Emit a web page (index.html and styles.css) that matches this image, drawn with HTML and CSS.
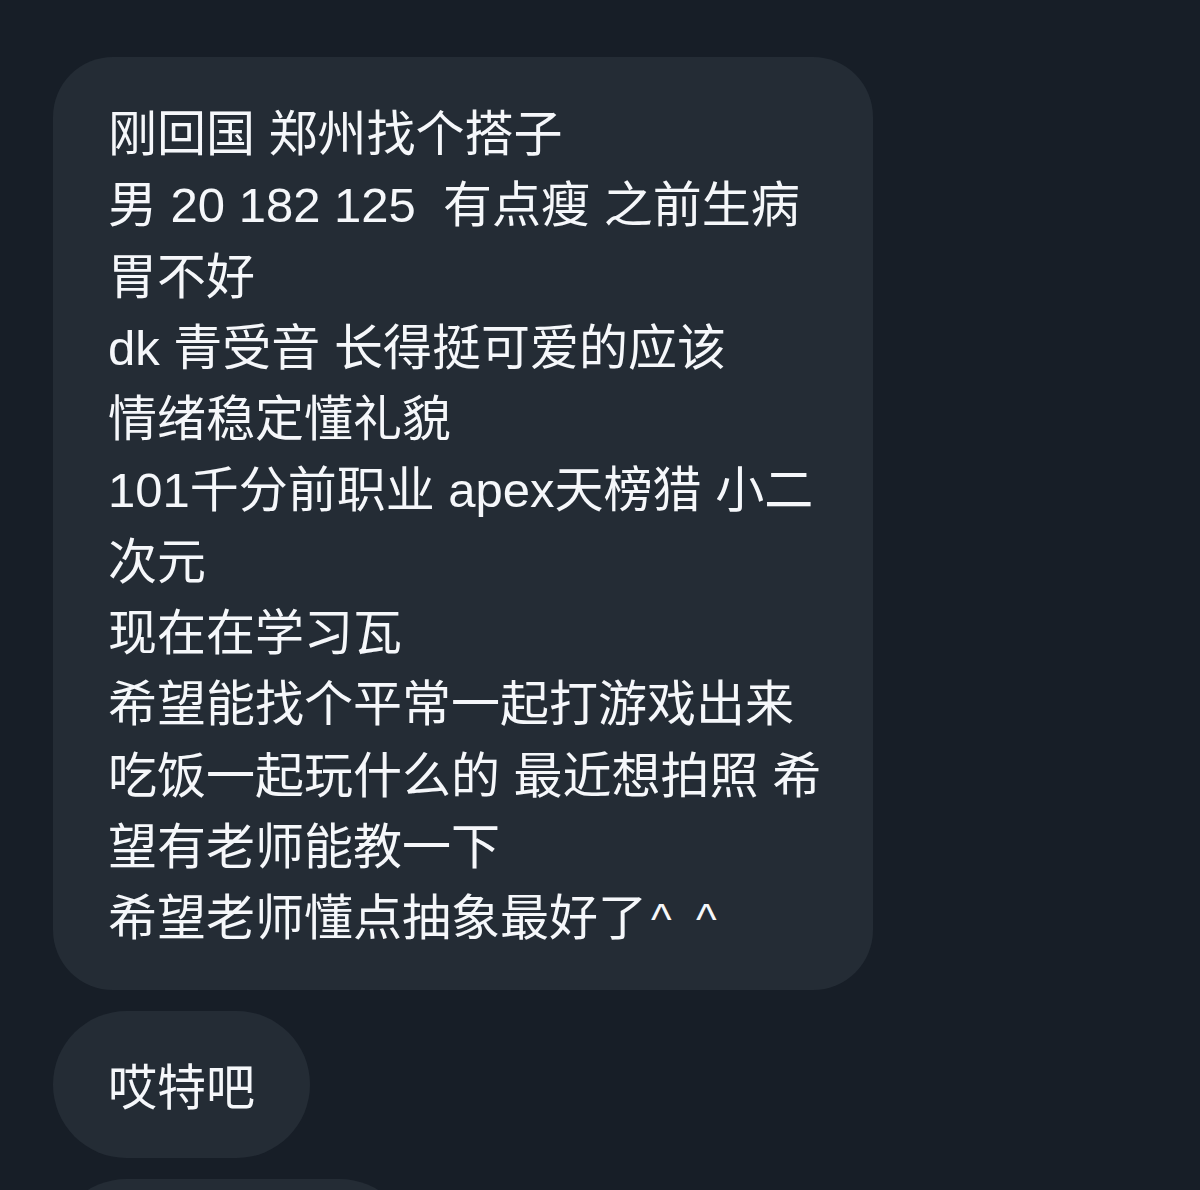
FILE: index.html
```html
<!DOCTYPE html>
<html lang="zh-CN">
<head>
    <meta charset="UTF-8">
    <meta name="viewport" content="width=device-width, initial-scale=1.0">
    <title>Messages</title>
    <link rel="stylesheet" href="styles.css">
</head>
<body>
    <div class="chat">
        <div class="bubble wide">
            刚回国 郑州找个搭子<br>
            男 20 182 125&nbsp; 有点瘦 之前生病<br>
            胃不好<br>
            dk 青受音 长得挺可爱的应该<br>
            情绪稳定懂礼貌<br>
            101千分前职业 apex天榜猎 小二<br>
            次元<br>
            现在在学习瓦<br>
            希望能找个平常一起打游戏出来<br>
            吃饭一起玩什么的 最近想拍照 希<br>
            望有老师能教一下<br>
            希望老师懂点抽象最好了<span class="caret">^&nbsp; ^</span>
        </div>

        <div class="bubble">哎特吧</div>

        <div class="bubble next">&nbsp;</div>
    </div>
</body>
</html>
```

FILE: styles.css
```css
body {
    margin: 0;
    padding: 0;
    background-color: #171e27;
    color: #f5f7fa;
    font-family: "Liberation Sans", "Noto Sans CJK SC", sans-serif;
    overflow: hidden;
}
.chat {
    display: flex;
    flex-direction: column;
    align-items: flex-start;
    gap: 21px;
    padding: 57px 0 0 53px;
}
.bubble {
    box-sizing: border-box;
    background-color: #242c35;
    border-radius: 74px;
    padding: 42px 55px 34px;
    font-size: 49px;
    line-height: 71.3px;
    white-space: nowrap;
}
.bubble.wide {
    width: 820px;
    border-radius: 60px;
}
.bubble.next {
    width: 360px;
}
.caret {
    font-size: 44px;
    margin-left: 4px;
}
```
